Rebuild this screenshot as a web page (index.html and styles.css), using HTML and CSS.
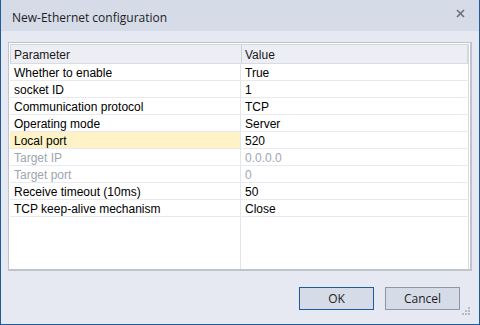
FILE: index.html
```html
<!DOCTYPE html>
<html lang="en">
<head>
    <meta charset="UTF-8">
    <title>New-Ethernet configuration</title>
    <link rel="stylesheet" href="styles.css">
</head>
<body>
    <div class="dialog">
        <div class="titlebar">
            <span class="title">New-Ethernet configuration</span>
            <span class="close">
                <svg width="9" height="9" viewBox="0 0 9 9"><path d="M1 1L8 8M8 1L1 8" stroke="#6b6f78" stroke-width="1.6"/></svg>
            </span>
        </div>

        <div class="content">
            <div class="grid">
                <div class="row head">
                    <div class="cell">Parameter</div>
                    <div class="cell">Value</div>
                </div>
                <div class="row"><div class="cell">Whether to enable</div><div class="cell">True</div></div>
                <div class="row"><div class="cell">socket ID</div><div class="cell">1</div></div>
                <div class="row"><div class="cell">Communication protocol</div><div class="cell">TCP</div></div>
                <div class="row"><div class="cell">Operating mode</div><div class="cell">Server</div></div>
                <div class="row selected"><div class="cell">Local port</div><div class="cell">520</div></div>
                <div class="row disabled"><div class="cell">Target IP</div><div class="cell">0.0.0.0</div></div>
                <div class="row disabled"><div class="cell">Target port</div><div class="cell">0</div></div>
                <div class="row"><div class="cell">Receive timeout (10ms)</div><div class="cell">50</div></div>
                <div class="row"><div class="cell">TCP keep-alive mechanism</div><div class="cell">Close</div></div>
                <div class="row filler"><div class="cell"></div><div class="cell"></div></div>
            </div>

            <div class="buttons">
                <button class="btn default">OK</button>
                <button class="btn">Cancel</button>
            </div>
        </div>

        <div class="grip">
            <svg width="8" height="8" viewBox="0 0 8 8" fill="#b4b9c4">
                <rect x="6" y="0" width="2" height="2"/>
                <rect x="3" y="3" width="2" height="2"/>
                <rect x="6" y="3" width="2" height="2"/>
                <rect x="0" y="6" width="2" height="2"/>
                <rect x="3" y="6" width="2" height="2"/>
                <rect x="6" y="6" width="2" height="2"/>
            </svg>
        </div>
    </div>
</body>
</html>
```

FILE: styles.css
```css
* {
    margin: 0;
    padding: 0;
    box-sizing: border-box;
}

body {
    width: 480px;
    height: 325px;
    overflow: hidden;
    background: #e6e9f2;
    font-family: "Liberation Sans", Arial, sans-serif;
}

.dialog {
    position: relative;
    width: 480px;
    height: 325px;
    background: #e6e9f2;
    border-left: 1px solid #1d5b9c;
    border-right: 1px solid #1d5b9c;
    border-bottom: 1px solid #1d5b9c;
    display: flex;
    flex-direction: column;
}

.titlebar {
    height: 31px;
    background: #d6dbe8;
    display: flex;
    align-items: center;
    justify-content: space-between;
    padding: 0 14px 0 11px;
}

.title {
    font-family: "Open Sans", "Noto Sans", sans-serif;
    font-size: 12px;
    color: #1e1e1e;
    padding-top: 4px;
}

.close {
    display: flex;
    padding-bottom: 5px;
}

.content {
    flex: 1;
    padding: 11px 7px 0 7px;
    display: flex;
    flex-direction: column;
}

.grid {
    height: 229px;
    background: #fff;
    border: 1px solid #bfc3cc;
    border-bottom-width: 2px;
    border-right-width: 2px;
    padding: 1px 1px 0 1px;
    display: flex;
    flex-direction: column;
    font-size: 12px;
    color: #000;
}

.row {
    display: flex;
    height: 17px;
    border-bottom: 1px solid #e8eaf0;
}

.cell {
    line-height: 16px;
    padding-top: 1px;
    padding-left: 4px;
    white-space: nowrap;
}

.cell:first-child {
    width: 231px;
    border-right: 1px solid #e2e5ec;
}

.cell:last-child {
    flex: 1;
    border-right: 1px solid #d6d9e0;
}

.row.head {
    height: 20px;
    background: #eceef4;
    border: 1px solid #d2d6de;
    border-bottom-color: #d8dbe2;
    color: #1a1a1a;
}

.row.head .cell {
    line-height: 19px;
    padding-left: 3px;
}

.row.head .cell:first-child {
    border-right-color: #cdd1d9;
}

.row.selected .cell:first-child {
    background: #fdf3c6;
}

.row.disabled {
    color: #9ea6b3;
}

.row.filler {
    flex: 1;
    border-bottom: none;
}

.buttons {
    display: flex;
    justify-content: flex-end;
    gap: 11px;
    padding: 16px 12px 0 0;
}

.btn {
    width: 75px;
    height: 23px;
    background: #d6dbe8;
    border: 1px solid #8d95a6;
    font-family: "Open Sans", "Noto Sans", sans-serif;
    font-size: 12px;
    color: #1e1e1e;
}

.btn.default {
    border-color: #1d5b9c;
}

.grip {
    position: absolute;
    right: 9px;
    bottom: 9px;
    display: flex;
}
```
